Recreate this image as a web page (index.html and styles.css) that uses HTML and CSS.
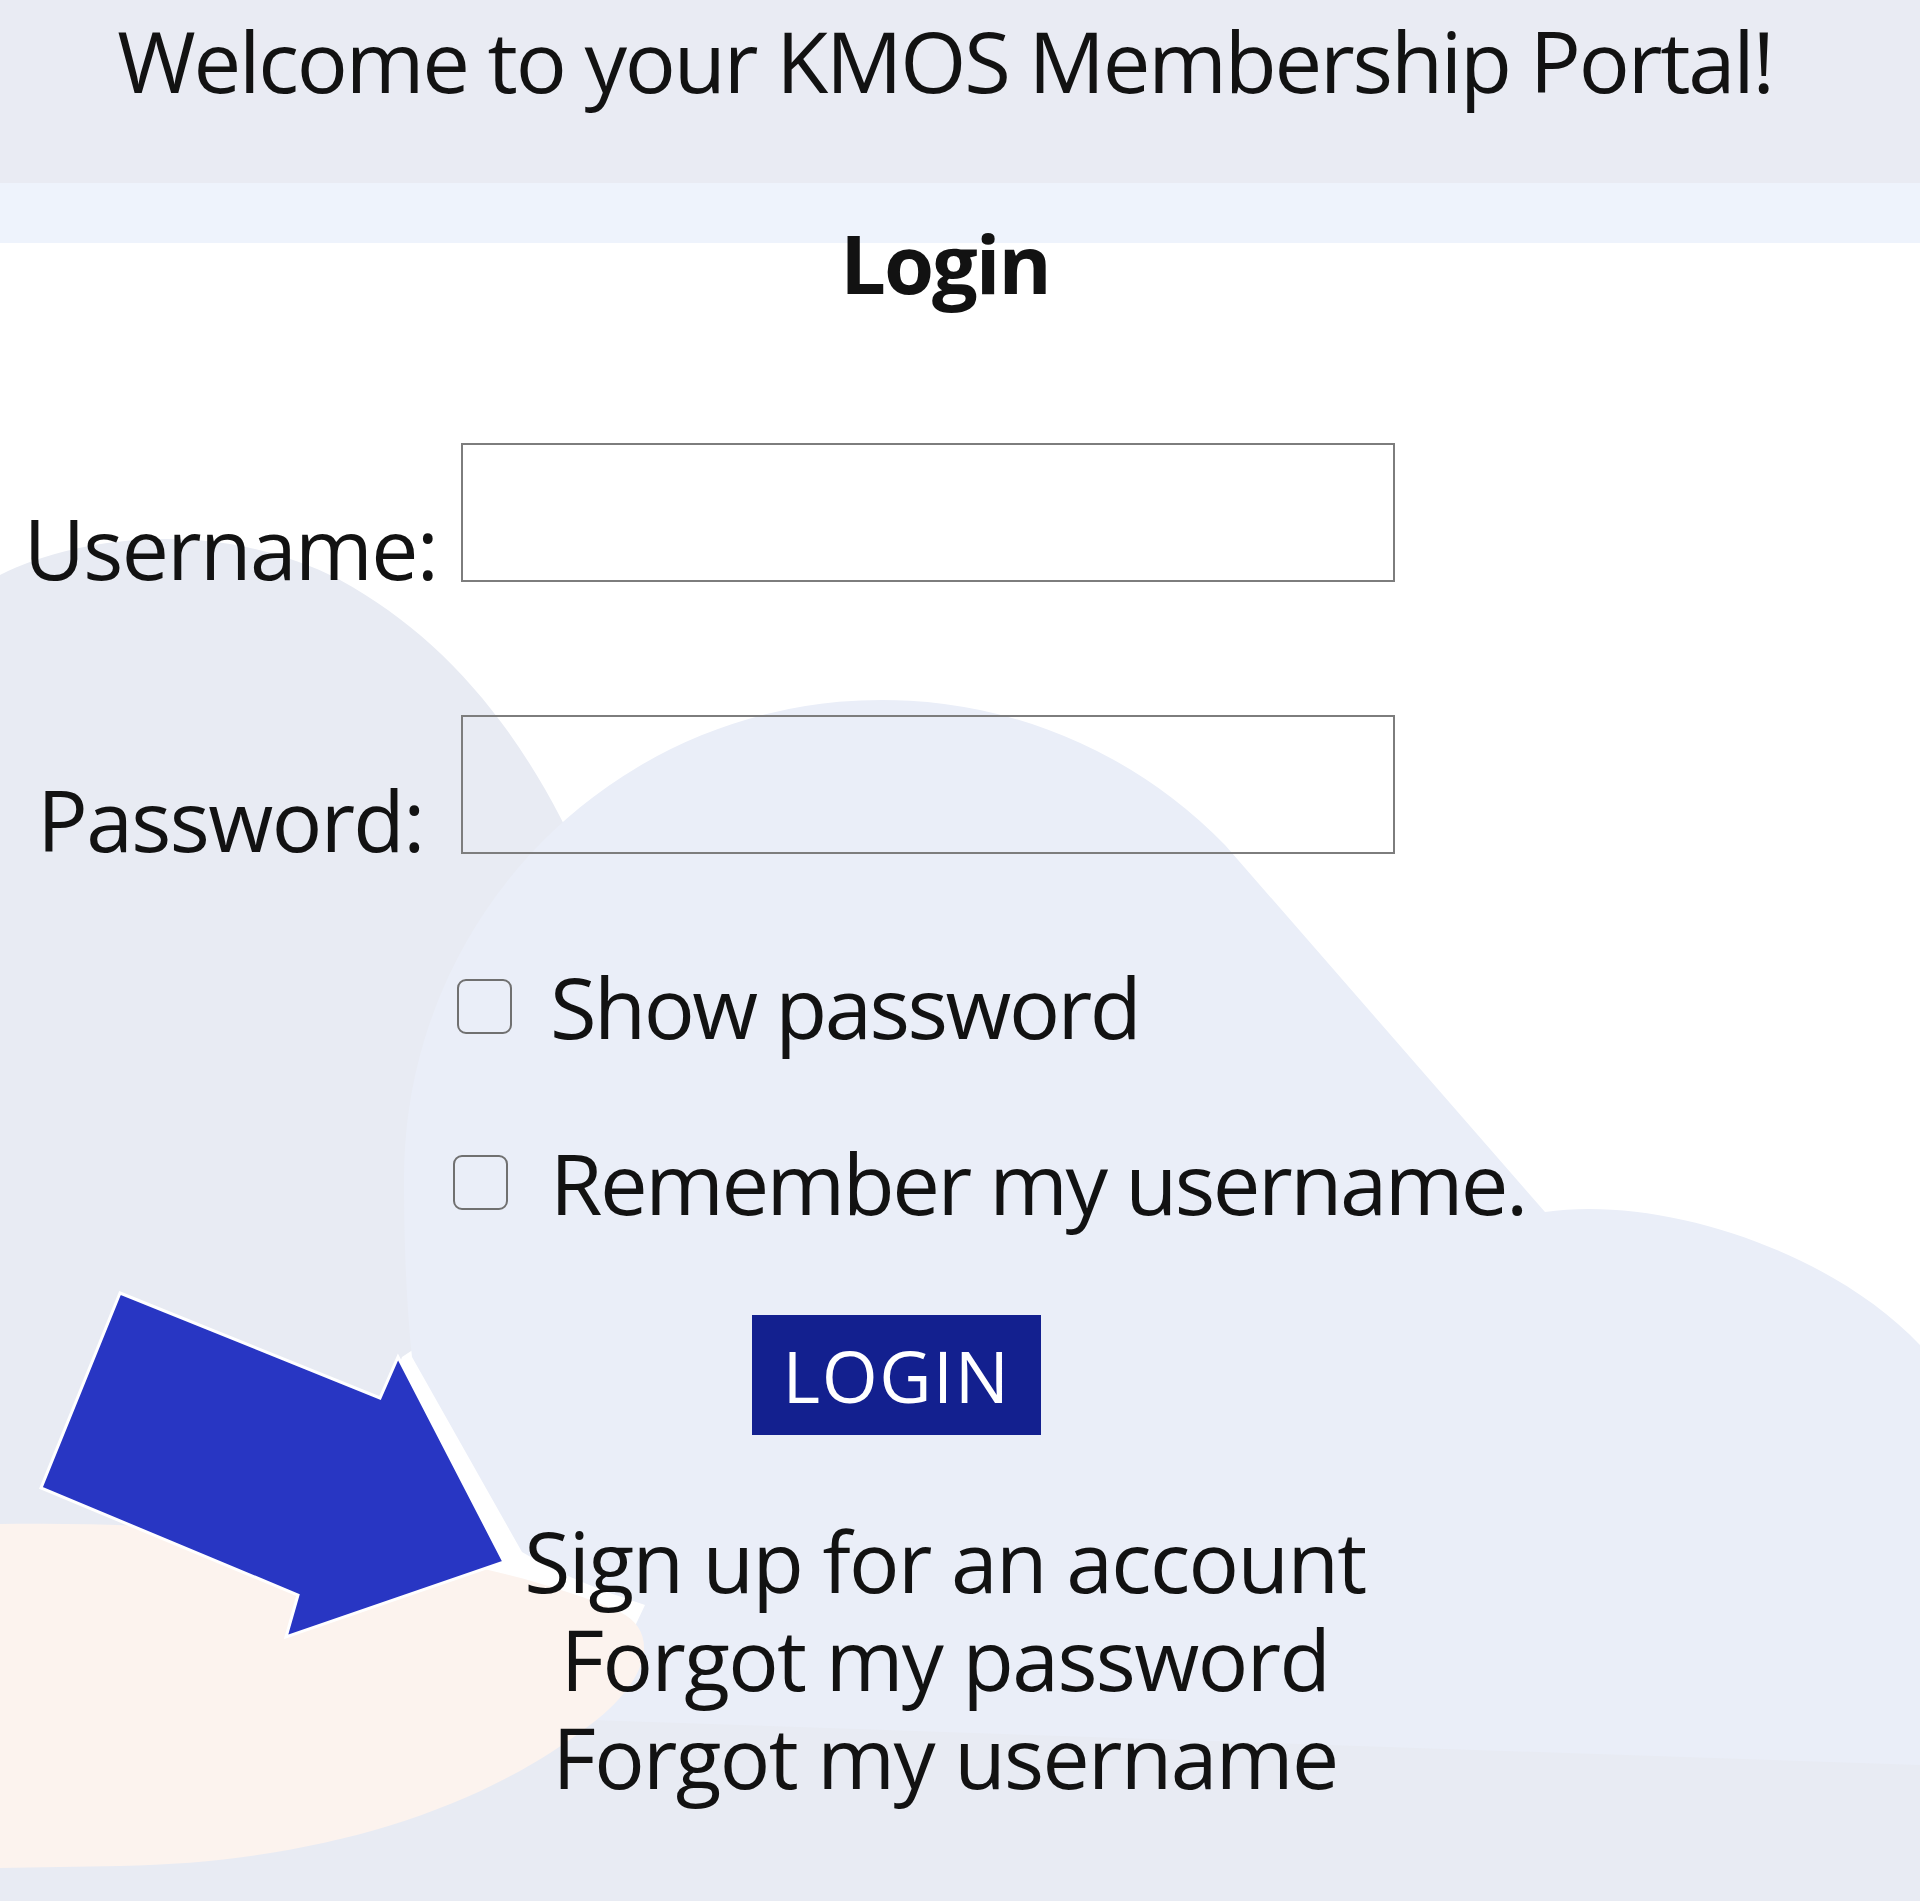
FILE: index.html
```html
<!DOCTYPE html>
<html lang="en">
<head>
<meta charset="utf-8">
<title>KMOS Membership Portal</title>
<link rel="stylesheet" href="styles.css">
</head>
<body>
<div class="page">
  <svg class="decor" viewBox="0 0 1920 1901" width="1920" height="1901" aria-hidden="true">
    <path class="blob-left" d="M0,575 C80,535 220,518 340,580 C450,640 530,740 590,880 L640,1200 L402,1357 L380,1420 L330,1530 C200,1545 100,1552 0,1552 Z"/>
    <path class="blob-big" d="M404,1180 A478,478 0 0 1 1225,845 L1545,1212 C1660,1195 1830,1250 1920,1345 L1920,1901 L560,1901 L560,1760 L600,1700 L645,1605 C600,1590 560,1575 522,1552 L412,1357 C408,1320 404,1260 404,1180 Z"/>
    <path class="blob-bottom" d="M0,1700 L1920,1765 L1920,1901 L0,1901 Z"/>
    <path class="blob-peach" d="M0,1524 C220,1520 480,1550 620,1612 C660,1632 650,1680 590,1725 C480,1810 320,1862 120,1866 L0,1868 Z"/>
  </svg>

  <header class="welcome">
    <h1>Welcome to your KMOS Membership Portal!</h1>
  </header>
  <div class="band"></div>

  <main class="login">
    <h2 class="login-title">Login</h2>
    <form class="login-form" action="#" onsubmit="return false">
      <div class="field">
        <label class="field-label" for="username">Username:</label>
        <input class="field-input" id="username" type="text">
      </div>
      <div class="field field-password">
        <label class="field-label" for="password">Password:</label>
        <input class="field-input" id="password" type="password">
      </div>
      <label class="check check-show">
        <input class="check-box" type="checkbox">
        <span class="check-text">Show password</span>
      </label>
      <label class="check check-remember">
        <input class="check-box" type="checkbox">
        <span class="check-text">Remember my username.</span>
      </label>
      <button class="login-button" type="submit">LOGIN</button>
      <nav class="links">
        <a href="#">Sign up for an account</a>
        <a href="#">Forgot my password</a>
        <a href="#">Forgot my username</a>
      </nav>
    </form>
  </main>

  <svg class="arrow" viewBox="0 0 1920 1901" width="1920" height="1901" aria-hidden="true">
    <polygon points="120,1293 380,1398 398,1357 504,1562 286,1637 298,1595 41,1488"/>
  </svg>
</div>
</body>
</html>
```

FILE: styles.css
```css
html, body {
  margin: 0;
  padding: 0;
}

body {
  background: #ffffff;
  font-family: "Open Sans", "Noto Sans", sans-serif;
  color: #121212;
}

.page {
  position: relative;
  width: 1920px;
  height: 1901px;
  overflow: hidden;
}

.decor {
  position: absolute;
  left: 0;
  top: 0;
  z-index: 0;
}

.blob-left { fill: #e8ebf3; }
.blob-big { fill: #eaeef8; }
.blob-bottom { fill: #e8ebf3; }
.blob-peach { fill: #fcf3ee; }

.arrow {
  position: absolute;
  left: 0;
  top: 0;
  z-index: 3;
  pointer-events: none;
}

.arrow polygon {
  fill: #2836c3;
  stroke: #ffffff;
  stroke-width: 3;
  stroke-linejoin: miter;
}

.welcome {
  position: relative;
  z-index: 1;
  height: 183px;
  background: #e9ebf3;
  padding-right: 30px;
  box-sizing: border-box;
}

.welcome h1 {
  margin: 0;
  padding-top: 2px;
  font-size: 85px;
  font-weight: 400;
  line-height: normal;
  letter-spacing: -2.2px;
  text-align: center;
}

.band {
  position: relative;
  z-index: 1;
  height: 60px;
  background: #eef3fc;
}

.login {
  position: relative;
  z-index: 2;
  width: 1890px;
}

.login-title {
  margin: -21px 0 0;
  font-size: 81px;
  font-weight: 700;
  line-height: 81px;
  letter-spacing: -2px;
  text-align: center;
}

.login-form {
  display: flex;
  flex-direction: column;
}

.field {
  display: flex;
  align-items: flex-end;
  margin-top: 140px;
}

.field-password {
  margin-top: 133px;
}

.field-label {
  flex: 0 0 461px;
  font-size: 84px;
  line-height: 68px;
  letter-spacing: -1.6px;
  text-align: center;
}

.field-input {
  width: 934px;
  height: 139px;
  box-sizing: border-box;
  margin: 0;
  border: 2px solid #7d7d7d;
  background: transparent;
  font: inherit;
}

.check {
  display: flex;
  align-items: center;
  height: 85px;
  padding-left: 457px;
  gap: 38px;
  margin-top: 91px;
}

.check-show {
  margin-top: 110px;
}

.check-remember {
  padding-left: 453px;
}

.check-box {
  appearance: none;
  -webkit-appearance: none;
  flex: 0 0 auto;
  width: 55px;
  height: 55px;
  margin: 0;
  box-sizing: border-box;
  border: 2.5px solid #707070;
  border-radius: 9px;
  background: transparent;
}

.check-remember .check-box {
  margin-right: 4px;
}

.check-text {
  font-size: 85px;
  line-height: 85px;
  letter-spacing: -2.5px;
  white-space: nowrap;
}

.login-button {
  align-self: flex-start;
  margin: 90px 0 0 752px;
  width: 289px;
  height: 120px;
  padding: 0;
  border: none;
  background: #13208f;
  color: #ffffff;
  font-family: inherit;
  font-size: 72px;
  line-height: 1;
  letter-spacing: 1.5px;
}

.links {
  display: flex;
  flex-direction: column;
  align-items: center;
  margin-top: 77px;
}

.links a {
  font-size: 84px;
  line-height: 98px;
  letter-spacing: -1.6px;
  color: #121212;
  text-decoration: none;
}
```
